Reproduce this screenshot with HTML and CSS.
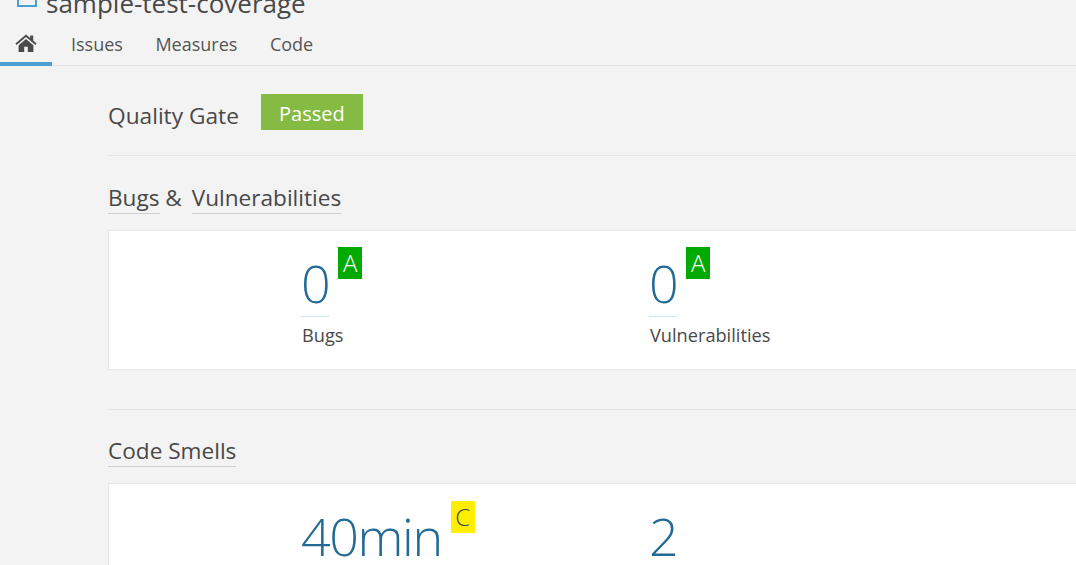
FILE: index.html
```html
<!DOCTYPE html>
<html lang="en">
<head>
    <meta charset="UTF-8">
    <title>sample-test-coverage</title>
    <link rel="stylesheet" href="styles.css">
</head>
<body>
    <header class="project-title">
        <span class="project-icon"></span>
        <h1>sample-test-coverage</h1>
    </header>

    <nav class="tabs">
        <a class="tab tab-home active" href="#">
            <svg class="home-icon" viewBox="0 0 22 18" width="22" height="18">
                <path fill="#4b4b4b" d="M11 0.6 0.4 9.4l1.2 1.5L11 3.1l9.4 7.8 1.2-1.5-3.4-2.8V1.4h-3v2.5zM3.6 11.2V18h5.6v-5.2h3.6V18h5.6v-6.8L11 5z"/>
            </svg>
        </a>
        <a class="tab" href="#">Issues</a>
        <a class="tab" href="#">Measures</a>
        <a class="tab" href="#">Code</a>
    </nav>

    <main class="overview">
        <section class="gate">
            <h2 class="gate-title">Quality Gate</h2>
            <span class="gate-status">Passed</span>
        </section>

        <section class="domain domain-bugs">
            <h3 class="domain-title"><span>Bugs</span> &amp; <span>Vulnerabilities</span></h3>
            <div class="card">
                <div class="measure">
                    <div class="measure-top">
                        <a class="measure-value" href="#">0</a>
                        <span class="rating rating-a">A</span>
                    </div>
                    <div class="measure-label">Bugs</div>
                </div>
                <div class="measure">
                    <div class="measure-top">
                        <a class="measure-value" href="#">0</a>
                        <span class="rating rating-a">A</span>
                    </div>
                    <div class="measure-label">Vulnerabilities</div>
                </div>
            </div>
        </section>

        <section class="domain domain-smells">
            <h3 class="domain-title"><span>Code Smells</span></h3>
            <div class="card">
                <div class="measure">
                    <div class="measure-top">
                        <a class="measure-value" href="#">40min</a>
                        <span class="rating rating-c">C</span>
                    </div>
                </div>
                <div class="measure">
                    <div class="measure-top">
                        <a class="measure-value" href="#">2</a>
                    </div>
                </div>
            </div>
        </section>
    </main>
</body>
</html>
```

FILE: styles.css
```css
html, body {
    height: 565px;
    overflow: hidden;
}
body {
    margin: 0;
    background: #f3f3f3;
    color: #484848;
    font-family: "Open Sans", "Noto Sans", sans-serif;
}
a {
    color: inherit;
    text-decoration: none;
}
.project-title {
    display: flex;
    align-items: center;
    height: 34px;
    margin-top: -14px;
    padding-left: 17px;
}
.project-icon {
    width: 16px;
    height: 17px;
    border: 2px solid #4b9fd5;
    margin: 0 9px 14px 0;
}
.project-title h1 {
    margin: 0;
    font-size: 26px;
    font-weight: 400;
    color: #484848;
}
.tabs {
    display: flex;
    height: 41px;
    margin-top: 5px;
    box-sizing: border-box;
    border-bottom: 1px solid #e6e6e6;
}
.tab {
    display: flex;
    align-items: center;
    height: 38px;
    margin-right: 32.5px;
    font-size: 18px;
    color: #555;
}
.tab-home {
    width: 52px;
    height: 41px;
    margin-right: 19px;
    justify-content: center;
    box-sizing: border-box;
    padding-bottom: 1px;
    padding-right: 1px;
    border-bottom: 4px solid #4b9fd5;
}
.overview {
    padding-left: 108px;
}
.gate {
    display: flex;
    align-items: flex-start;
    height: 90px;
    padding-top: 28px;
    box-sizing: border-box;
    border-bottom: 1px solid #e6e6e6;
}
.gate-title {
    margin: 6px 22px 0 0;
    font-size: 22.7px;
    line-height: 32px;
    font-weight: 400;
}
.gate-status {
    width: 102px;
    height: 36px;
    background: #85bb43;
    color: #fff;
    font-size: 20px;
    line-height: 39px;
    text-align: center;
}
.domain {
    padding-top: 27px;
}
.domain-bugs {
    height: 254px;
    box-sizing: border-box;
    border-bottom: 1px solid #e6e6e6;
}
.domain-smells {
    padding-top: 26px;
}
.domain-title {
    margin: 0 0 17px;
    height: 30px;
    font-size: 22.6px;
    line-height: 30px;
    font-weight: 400;
}
.domain-title span {
    display: inline-block;
    border-bottom: 1px solid #cfcfcf;
}
.domain-title span + span {
    margin-left: 4px;
}
.card {
    display: flex;
    height: 140px;
    box-sizing: border-box;
    margin-right: -10px;
    padding: 16px 0 0 192px;
    background: #fff;
    border: 1px solid #e6e6e6;
}
.measure {
    width: 348px;
}
.measure-top {
    display: flex;
    align-items: flex-start;
    height: 70px;
}
.measure-value {
    display: block;
    height: 70px;
    margin-right: 9px;
    box-sizing: border-box;
    font-size: 52px;
    line-height: 72px;
    font-weight: 300;
    letter-spacing: -1.4px;
    color: #236a97;
    border-bottom: 1px solid #cae3f2;
}
.rating {
    width: 24px;
    height: 32px;
    font-size: 24px;
    line-height: 32px;
    text-align: center;
    font-weight: 300;
}
.rating-a {
    background: #00aa00;
    color: #fff;
}
.rating-c {
    margin-top: 1px;
    background: #ffee00;
    color: #444;
}
.measure-label {
    margin-top: 5px;
    padding-left: 1px;
    font-size: 18.2px;
    line-height: 26px;
}
```
